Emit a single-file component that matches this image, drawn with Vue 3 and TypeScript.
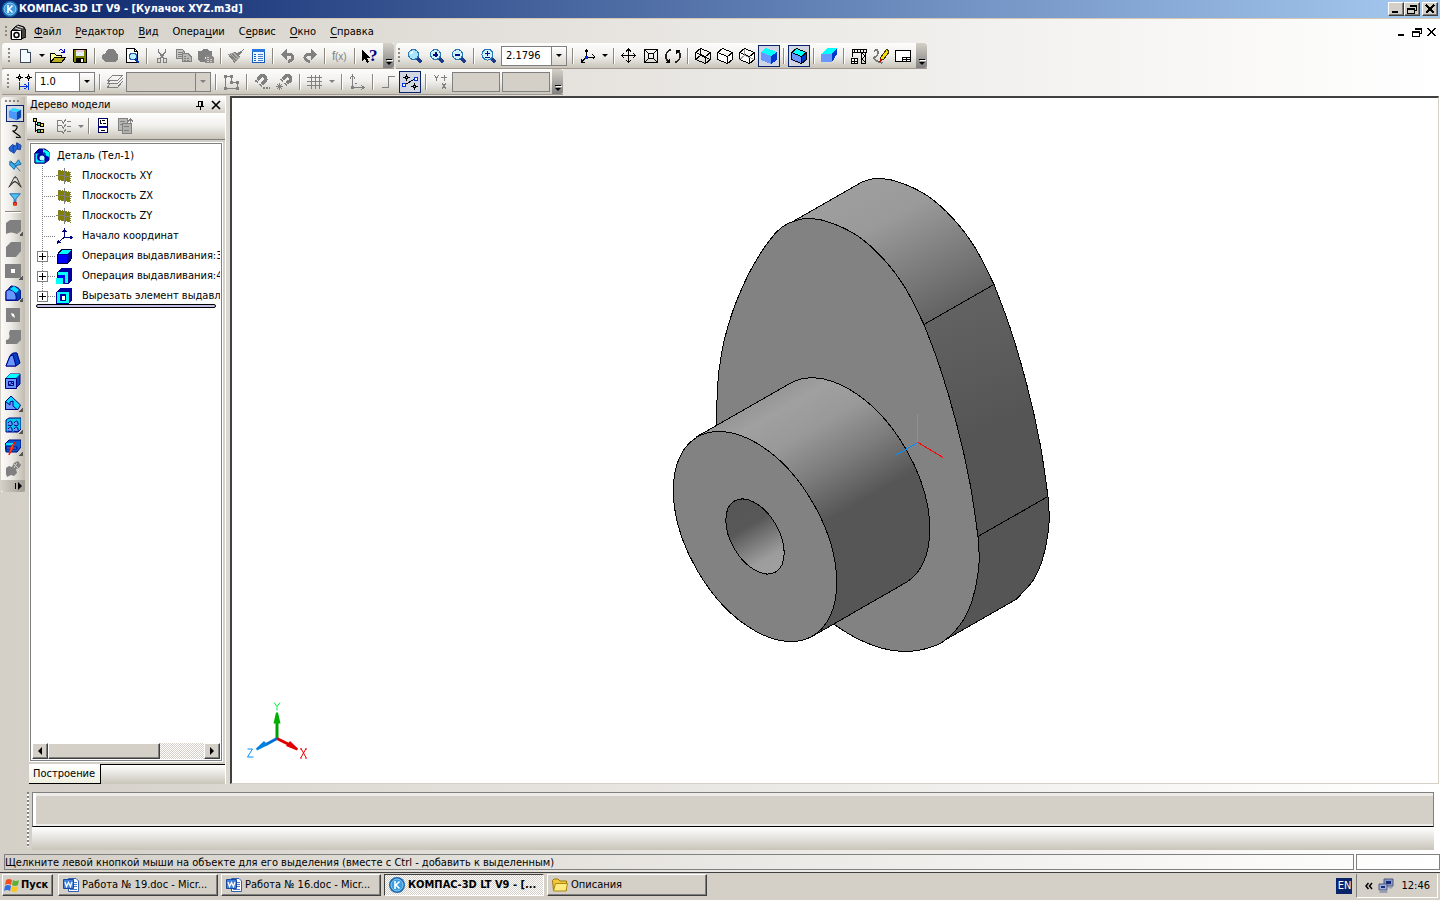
<script setup lang="ts">
import { ref } from 'vue'

type Tool = { kind: 'btn' | 'sep' | 'drop'; icon?: string; label?: string; on?: boolean; off?: boolean }

const b = (icon: string, label: string, extra: Partial<Tool> = {}): Tool => ({ kind: 'btn', icon, label, ...extra })
const sep: Tool = { kind: 'sep' }
const drop: Tool = { kind: 'drop', label: 'Ещё' }
const off = { off: true }
const on = { on: true }

const cubeWire = 'M.5 4.500 5.500 .5 15.500 4.500V11.500L10.500 15.500 .5 11.500ZM.5 4.500 10.500 8.500 15.500 4.500M10.500 8.500V15.500'
const cubeBack = 'M5.500 .5V7.500L.5 11.500M5.500 7.500 15.500 11.500'
const G = '#808080'

const icons: Record<string, string> = {
  blank: '<path d="M3.500 1.500H10.500L13.500 4.500V14.500H3.500Z" fill="#f4fcff" stroke="#404858"/><path d="M10.500 1.500V4.500H13.500" fill="#bfe8f0" stroke="#404858"/>',
  open: '<path d="M.5 14.500V5.500H4.500L6.500 7.500H11.500V9.500" fill="#ffff9c" stroke="#000"/><path d="M.5 14.500 4.500 9.500H15.500L11.500 14.500Z" fill="#b8b020" stroke="#000"/><path d="M8.500 3.500C10 1 12 1 14 4M14.500 1V4.500H11" fill="none" stroke="#0000d0"/>',
  save: '<path d="M1.500 1.500H14.500V14.500H2.500L1.500 13.500Z" fill="#808000" stroke="#000"/><path d="M4 2H12V8H4Z" fill="#e0f0f4"/><path d="M4 2H12V4H4Z" fill="#f4c8d8"/><path d="M4 10H12V15H4Z" fill="#000"/><path d="M9 11H11V14H9Z" fill="#fff"/>',
  print: '<path d="M4 3 6 1H12L14 4 16 7V11L13 14H3L0 11V7L4 5Z" fill="#808080"/>',
  preview: '<path d="M2.500 .5H10.500L13.500 3.500V14.500H2.500Z" fill="#fff" stroke="#000"/><path d="M10.500 .5V3.500H13.500" fill="none" stroke="#000"/><circle cx="9" cy="8.500" r="3.500" fill="#b8ecff" stroke="#2060b0"/><path d="M11 11 15 15" stroke="#0038a8" stroke-width="2.500"/>',
  cut: '<path d="M4.500 1V4L9.500 10M11.500 1V4L6.500 10" stroke="#808080" stroke-width="1.500" fill="none"/><rect x="3.500" y="10.500" width="3" height="4" fill="none" stroke="#808080" stroke-width="1.300"/><rect x="9.500" y="10.500" width="3" height="4" fill="none" stroke="#808080" stroke-width="1.300"/>',
  copy: '<path d="M.5 1.500H6.500L8.500 4V10.500H.5Z" fill="#c8c8c4" stroke="#808080"/><path d="M2 4.500H7M2 6.500H7M2 8.500H6" stroke="#808080"/><path d="M6.500 5.500H12L15.500 9V13.500H6.500Z" fill="#b8b8b4" stroke="#808080"/><path d="M8 8.500H11M8 10.500H14M8 12.500H14" stroke="#808080" stroke-dasharray="2 1"/>',
  paste: '<path d="M0 3H4L5 1H10L11 3H14V9H7V14H2L0 12Z" fill="#808080"/><path d="M8 7H13L16 10V15H7Z" fill="#888"/><path d="M9 9.500H12M9 11.500H14M9 13.500H14" stroke="#d4d0c8" stroke-dasharray="2 1"/>',
  brush: '<path d="M16 1 13 6 10 8 8 6 12 3.500Z" fill="#808080"/><path d="M6 4 12 9 7 15 0 6.500Z" fill="#b4b2ac"/><path d="M6 4 12 9M4 5.500 10 11M2 6 8.500 13M0.500 6.500 7 14.500" stroke="#808080" stroke-width="1.200"/>',
  props: '<rect x="2.500" y="1.500" width="12" height="13" fill="#eef6ff" stroke="#1858b8"/><path d="M2 1H15V4H2Z" fill="#2878e0"/><path d="M4 6.500H6M4 8.500H6M4 10.500H6M4 12.500H6" stroke="#1858b8"/><path d="M8 6.500H13M8 8.500H13M8 10.500H13M8 12.500H13" stroke="#4080d0"/>',
  undo: '<path d="M4 6.500H9Q13 6.500 13 9.500T8 13.500" fill="none" stroke="#808080" stroke-width="3"/><path d="M1 6.500 7 1V12Z" fill="#808080"/>',
  redo: '<path d="M12 6.500H7Q3 6.500 3 9.500T8 13.500" fill="none" stroke="#808080" stroke-width="3"/><path d="M15 6.500 9 1V12Z" fill="#808080"/>',
  fx: '<text x="0" y="12" font-size="12" font-family="Liberation Sans, sans-serif" fill="#808080">f</text><text x="3" y="12" font-size="10" font-family="Liberation Sans, sans-serif" fill="#808080">(x)</text>',
  whats: '<path d="M0 2V13L3 10.500 5 15 7 14 5 10H8Z" fill="#000"/><text x="7" y="13" font-size="17" font-weight="700" font-family="Liberation Serif, serif" fill="#000080">?</text>',
  zoom: '<path d="M10 10 14.500 14.500" stroke="#1c3c8c" stroke-width="3"/><circle cx="6.500" cy="6.500" r="5" fill="#a8e4fc" stroke="#2878b8"/><path d="M4 6Q4 4 6 4" stroke="#fff" fill="none" stroke-width="1.500"/>',
  zoomin: '<path d="M10 10 14.500 14.500" stroke="#1c3c8c" stroke-width="3"/><circle cx="6.500" cy="6.500" r="5" fill="#d0f0fc" stroke="#2878b8"/><path d="M4 6.500H9M6.500 4V9" stroke="#001080" stroke-width="2"/>',
  zoomout: '<path d="M10 10 14.500 14.500" stroke="#1c3c8c" stroke-width="3"/><circle cx="6.500" cy="6.500" r="5" fill="#d0f0fc" stroke="#2878b8"/><path d="M4 6.500H9" stroke="#001080" stroke-width="2"/>',
  zoomscale: '<path d="M10 10 14.500 14.500" stroke="#1c3c8c" stroke-width="3"/><circle cx="6.500" cy="6.500" r="5.500" fill="#d0f0fc" stroke="#2878b8"/><path d="M4 5.500H9M6.500 3V8M4 9.500H9" stroke="#001080" stroke-width="1.500"/>',
  orient: '<path d="M6.500 2V9H15M6 9.500 1.500 14M4.500 4.500 6.500 2 8.500 4.500M12.500 6.500 15 9 12.500 11.500M1.500 10.500V14H5" fill="none" stroke="#000"/><rect x="5" y="8" width="3" height="3" fill="#0020ff"/>',
  pan: '<path d="M7.500 1V15M.5 7.500H15M5 3.500 7.500 1 10 3.500M5 12 7.500 14.500 10 12M3 5 .5 7.500 3 10M12 5 14.500 7.500 12 10" fill="none" stroke="#000"/>',
  fit: '<path d="M1.500 1.500H14.500V14.500H1.500ZM5.500 5.500H10.500V10.500H5.500ZM2 2 5 5M14 2 11 5M2 14 5 11M14 14 11 11" fill="none" stroke="#000"/>',
  rotate: '<path d="M6 1.500Q1 3 1 8T4 13M10 14.500Q15 13 15 8T12 3" fill="none" stroke="#222" stroke-width="1.500"/><path d="M5 10V14.500H0.500Z" fill="#000"/><path d="M11 6V1.500H15.500Z" fill="#000"/>',
  wire: `<path d="${cubeWire}" fill="none" stroke="#000"/><path d="${cubeBack}" fill="none" stroke="#000"/>`,
  hidden: `<path d="${cubeWire}" fill="#fff" stroke="#000"/>`,
  thin: `<path d="${cubeWire}" fill="#fff" stroke="#000"/><path d="${cubeBack}" fill="none" stroke="#999"/>`,
  shade: '<path d="M0 4 5 0 16 4 10 8Z" fill="#00ffff"/><path d="M0 4 10 8V16L0 12Z" fill="#6898ff"/><path d="M10 8 16 4V12L10 16Z" fill="#0038d0"/>',
  shadeedge: '<path d="M0 4 5 0 16 4 10 8Z" fill="#00ffff"/><path d="M0 4 10 8V16L0 12Z" fill="#6898ff"/><path d="M10 8 16 4V12L10 16Z" fill="#0038d0"/>' + `<path d="${cubeWire}" fill="none" stroke="#000"/>`,
  persp: '<path d="M0 6 7 0H16L11 6Z" fill="#00ffff"/><path d="M0 6H11V14H0Z" fill="#6898ff"/><path d="M11 6 16 0V6L11 14Z" fill="#0038d0"/>',
  crane: '<path d="M1.500 5V1.500H15.500V4.500H1.500V9M10.500 5V15.500H14.500V5M10.500 5 14.500 8 10.500 11 14.500 14M3 2V4M6 2V4M9 2V4M12 2V4" fill="none" stroke="#000"/><path d="M0.500 10.500H6.500V15.500H0.500ZM3.500 10.500V15.500M0.500 13H6.500" fill="#fff" stroke="#000"/>',
  sketch: '<path d="M1 3Q5 0 5 4T2 9 4 13 9 14" fill="none" stroke="#777" stroke-width="1.500"/><path d="M7 13 8 9 14 1 16 4 11 11Z" fill="#f0e000" stroke="#403000"/><path d="M7 14V11L10 12Z" fill="#d00000"/>',
  window: '<path d="M0.500 2.500H15.500V13.500H0.500Z" fill="#fff" stroke="#000"/><path d="M7.500 9.500H15.500V13H7.500ZM11.500 9.500V13M7.500 11.500H15.500" fill="none" stroke="#000"/>',
  step: '<path d="M3.500 0V7M0 3.500H7M12.500 0V7M9 3.500H16" stroke="#000"/><path d="M2.500 2.500H4.500V4.500H2.500ZM11.500 2.500H13.500V4.500H11.500Z" fill="#fff" stroke="#000"/><path d="M3.500 8V16M12.500 8V16M4 12.500H12M8.500 10 11.500 12.500 8.500 15" fill="none" stroke="#0030e0"/>',
  layers: '<path d="M0.500 6.500 5.500 1.500H15.500L10.500 6.500ZM2.500 7 0.500 9.500H10.500L15.500 4.500M2.500 10 0.500 13.500H10.500L15.500 7.500" fill="none" stroke="#808080"/>',
  param: '<path d="M2.500 2.500H8.500V8.500H14.500V14.500H2.500Z" fill="none" stroke="#808080"/><path d="M1 1H4V4H1ZM7 1H10V4H7ZM7 7H10V10H7ZM13 7H16V10H13ZM13 13H16V16H13ZM1 13H4V16H1Z" fill="#808080"/>',
  magnet: '<path d="M2 8 6 3Q9 0 11 3T10 8L6 12" fill="none" stroke="#808080" stroke-width="3.500"/><path d="M2 5 5 8M6 9 9 12" stroke="#eee"/><path d="M9 14H11M12 14H14M15 14H16" stroke="#808080" stroke-width="2"/>',
  snap: '<path d="M5 7 9 3Q11 0 14 3T12 8L9 11" fill="none" stroke="#808080" stroke-width="3.500"/><path d="M5 4 8 7M9 8 12 11" stroke="#eee"/><path d="M3.500 9V16M0 12.500H7M1 10 6 15M6 10 1 15" stroke="#808080"/>',
  grid: '<path d="M4.500 1V15M8.500 1V15M12.500 1V15M0 3.500H15M0 7.500H15M0 11.500H15" stroke="#808080"/>',
  lcs: '<path d="M3.500 1V13.500H15M1 4.500 3.500 1 6 4.500M12 11 15 13.500 12 16" fill="none" stroke="#808080"/><path d="M2 12H5V15H2Z" fill="#808080"/><path d="M6 9.500H8" stroke="#808080"/>',
  ortho: '<path d="M2 13.500H8.500V2.500H15" fill="none" stroke="#808080"/>',
  round: '<path d="M4.500 0V7M1 3.500H8M12.500 9V16M9 12.500H16" stroke="#000"/><path d="M3.500 2.500H5.500V4.500H3.500ZM11.500 11.500H13.500V13.500H11.500Z" fill="#d2d6e2" stroke="#000"/><path d="M3 10.500 13 5" stroke="#000"/><rect x="0.500" y="9.500" width="3" height="3" fill="#fff" stroke="#0030e0"/><rect x="12.500" y="3.500" width="3" height="3" fill="#fff" stroke="#0030e0"/>',
  xy: '<path d="M1 1 3.500 4 6 1M3.500 4V7M8 3.500H14M11 1V6.500M9 9 13 15M13 9 9 15" fill="none" stroke="#808080"/>',
  // model tree panel
  treeview: '<path d="M3.500 2V14M3 6.500H8M3 12.500H8" fill="none" stroke="#000"/><path d="M1.500 0.500H4.500V3.500H1.500ZM8.500 5H11.500V8H8.500ZM8.500 11H11.500V14H8.500Z" fill="#f0e040" stroke="#000"/><path d="M5.500 4.500H8V7H5.500ZM5.500 11.500H8V14H5.500Z" fill="#30c080" stroke="#000"/>',
  checks: '<path d="M1.500 2V14M1 2.500H6M1 7.500H6M1 13.500H6M6 3 7.500 5 10 1M6 8 7.500 10 10 6M6 13 7.500 15 10 11M11 3.500H15M11 8.500H15M11 13.500H15" fill="none" stroke="#808080"/>',
  doc: '<path d="M3.500 .5H12.500V14.500H3.500Z" fill="#fff" stroke="#000060"/><path d="M3 8H13V10H3Z" fill="#000080"/><path d="M5.500 2V5.500H7M7 2.500H10M8 5.500H11" fill="none" stroke="#000"/><path d="M6 12.500H10" stroke="#000"/>',
  docs: '<path d="M1.500 .5H10.500V12.500H1.500Z" fill="#b8b8b4" stroke="#808080"/><path d="M5.500 5.500H14.500V15.500H5.500Z" fill="#b0b0ac" stroke="#808080"/><path d="M3 3.500H8M3 6.500H5M7 8.500H12M7 12.500H12M11 3 13.500 1 16 3M13.500 1V5" fill="none" stroke="#808080" stroke-width="1.500"/>',
  part: '<path d="M1 5 5 1H11L15 4V12L11 15H1Z" fill="#0000c0" stroke="#000060"/><path d="M9 1 15 4V9L9 6Z" fill="#00ffff"/><path d="M1 5H11V15H1Z" fill="#00e8ff" stroke="#000080"/><circle cx="7" cy="9" r="4" fill="#0000a0"/><circle cx="8" cy="10" r="2.500" fill="#c0ffff"/>',
  plane: '<path d="M2 2 14 4V14L2 12Z" fill="#808000"/><path d="M8 0V16M0 7 16 9" stroke="#808080"/><path d="M2 2 14 4V14L2 12Z" fill="none" stroke="#808040" stroke-dasharray="1 1"/>',
  origin: '<path d="M8.500 9V2M8 9.500H15M8 9.500 2 14.500" stroke="#000080" fill="none"/><path d="M8.500 0 11 4H6ZM17.500 9.500 13.500 7V12ZM0.500 16 2 11.500 5 14.500Z" fill="#000080"/>',
  extrude: '<path d="M1.500 6.500 5.500 1.500H15.500V10.500L11.500 15.500H1.500Z" fill="#0000a0" stroke="#000040"/><path d="M2 6 6 2H15L11 6Z" fill="#00ffff"/><path d="M2 7H11V15H2Z" fill="#0000ff"/>',
  extrude2: '<path d="M1 4 5 0H16V12L12 16H1Z" fill="#0000a0"/><path d="M2 4H12V15H9V7H2Z" fill="#00ffff"/><path d="M0 10H7V16H0Z" fill="#00ffff"/><path d="M0 10 3 7H9V13L7 15V10Z" fill="#0000ff"/>',
  cutout: '<path d="M0 4 4 0H16V12L12 16H0Z" fill="#0000a0"/><path d="M1 4H13V15H1Z" fill="#00ffff"/><path d="M4 6H10V13H4Z" fill="#0000a0"/><path d="M6 8H9V12H6Z" fill="#fff"/>',
  // compact panel
  cube: '<path d="M1 4 6 1 15 3 11 6Z" fill="#28d8ff"/><path d="M1 4 10 6V15L1 12Z" fill="#4898ff"/><path d="M10 6 15 3V12L10 15Z" fill="#0848b0"/>',
  curve: '<path d="M5 2Q12 1 10 5T6 8 11 12 9 15" fill="none" stroke="#000" stroke-width="1.300"/>',
  surf: '<path d="M1 8 5 4 9 6 10 2 15 5 14 10 10 9 7 14 2 11Z" fill="#2868d8" stroke="#103888"/><path d="M6 5V12M11 4V9" stroke="#103888"/>',
  surf2: '<path d="M2 4 8 7 12 2 15 7 9 9 7 13 2 8Z" fill="#38b0e8" stroke="#1860a0"/><path d="M3 3 14 15" stroke="#1860a0"/>',
  measure: '<path d="M1 14 7 3H10L15 14M3 10Q8 5 13 11M7 3 9 1M1 14 8 7 15 14" fill="none" stroke="#222"/>',
  filter: '<path d="M2 2H14L9 8V11H7V8Z" fill="#50c0f0" stroke="#1860b0"/><rect x="6.500" y="12" width="3" height="3" fill="#ff6000" stroke="#c00000"/>',
  g1: `<path d="M1 4 5 1H16V12L12 15Q6 12 1 15Z" fill="${G}"/>`,
  g2: `<path d="M1 6 6 1H16V10L11 16H1Z" fill="${G}"/>`,
  g3: `<path d="M0 1H16V15H0Z" fill="${G}"/><path d="M6 6H10V10H6Z" fill="#fff"/>`,
  g4: `<path d="M1 1H15V15H1Z" fill="${G}"/><path d="M6 6 9 7 10 11 7 9Z" fill="#fff"/>`,
  g5: `<path d="M5 1H16V11L12 15H1V11Q6 11 4 4Z" fill="${G}"/>`,
  g6: `<path d="M1 7 4 5 7 6 9 2 13 0 16 4 14 7 11 8 12 12 9 15 6 14 2 16 1 13Z" fill="${G}"/><path d="M9 3 13 7M12 2 9 7" stroke="#d4d0c8"/>`,
  fillet: '<path d="M1 7 6 1Q14 1 16 7V13L12 16H1Z" fill="#0040b0" stroke="#000080"/><path d="M1 15V6Q4 3 8 6T11 15Z" fill="#6898ff" stroke="#000080"/><path d="M5 4 9 1 14 5 11 8Z" fill="#00e0ff"/>',
  draft: '<path d="M1 15 5 5Q7 1 12 2L15 12 11 15Z" fill="#0040c0" stroke="#000080"/><path d="M1 15 5 5 8 4 11 15Z" fill="#6898ff" stroke="#000080"/>',
  shell: '<path d="M1 5 5 1H15V11L11 15H1Z" fill="#0040c0" stroke="#000080"/><path d="M1 5 5 1H15L11 5Z" fill="#00ffff"/><path d="M.5 5.500H11.500V15.500H.5Z" fill="#6898ff" stroke="#000080"/><path d="M3.500 8.500H8.500V12.500H3.500ZM4 12 6.500 10.500V8M7 10.500H9" fill="none" stroke="#000080"/>',
  section: '<path d="M.5 6.500 6 1 15.500 10 13 14.500H.5Z" fill="#00d8ff" stroke="#000080"/><path d="M.5 6.500 5 10V7L8 6V11L12 14.500H.5Z" fill="#6898ff" stroke="#000080"/>',
  array: '<path d="M1 3 4 1H16V12L13 15H1Z" fill="#00c8e8" stroke="#000080"/><path d="M3 6Q6 2 7 6T3 8M9 6Q12 2 13 6T9 8M3 12Q6 8 7 12T3 14M9 12Q12 8 13 12T9 14" fill="#6898ff" stroke="#000080"/>',
  simplify: '<path d="M0 5 4 1H16V8L12 13H1Z" fill="#0060d0" stroke="#000080"/><path d="M1 4H10L8 6H1Z" fill="#00e0ff"/><path d="M1 8H12V10H1Z" fill="#6898ff" stroke="#000080"/><path d="M4 16Q5 7 10 3L7 11Z" fill="#ff7000" stroke="#ff1000"/>',
  // shell
  kompas: '<circle cx="8" cy="8" r="8" fill="#1868b0"/><circle cx="8" cy="8" r="6" fill="#3c9ce0" stroke="#90ccf4"/><path d="M6 4V12M10.500 4.500 7 8 10.500 11.500" stroke="#fff" fill="none" stroke-width="1.600"/>',
  docpart: '<path d="M1 7 5 3 8 1 14 3 16 7V13L11 15H1Z" fill="#444" stroke="#000"/><path d="M1.500 6.500H11.500V15.500H1.500Z" fill="#fff" stroke="#000"/><circle cx="6.500" cy="11" r="2.500" fill="#fff" stroke="#000" stroke-width="1.500"/><path d="M7 2 13 4M5 4 11 6" stroke="#ddd"/>',
  flag: '<path d="M2 3Q5 1 8 3L7 8Q4 6 1 8Z" fill="#f05020"/><path d="M9 3Q12 5 15 3L14 8Q11 10 8 8Z" fill="#60b030"/><path d="M1 9Q4 7 7 9L6 14Q3 12 0 14Z" fill="#3070e0"/><path d="M8 9Q11 11 14 9L13 14Q10 16 7 14Z" fill="#f8c820"/>',
  word: '<path d="M5.500 1.500H13L15.500 4V14.500H5.500Z" fill="#fff" stroke="#3060b0"/><path d="M11 5.500H14M11 7.500H14M11 9.500H14M7 12.500H14" stroke="#4878c8"/><path d="M0.500 2.500H10.500V11.500H0.500Z" fill="#4080d8" stroke="#1848a0"/><path d="M2 5 3.500 9.500 5.500 5.500 7.500 9.500 9 5" fill="none" stroke="#fff" stroke-width="1.300"/>',
  folder: '<path d="M0.500 3.500 2 2H6L8 4H14.500V13.500H1.500Z" fill="#f0c83c" stroke="#a07808"/><path d="M1.500 14 3.500 6.500H15.500L14 14Z" fill="#ffec80" stroke="#b08810"/>',
  net: '<path d="M6 1H15V8H6Z" fill="#8898d0" stroke="#505878"/><path d="M8 3H13V6H8Z" fill="#182878"/><path d="M1 6H9V12H1Z" fill="#a0b0e0" stroke="#505878"/><path d="M3 8H7V10H3Z" fill="#182878"/><path d="M2 13H10L9 15H1ZM9 9H15L13 11Z" fill="#98a0b8"/>',
}

const standard: Tool[] = [
  b('blank', 'Создать'), drop, b('open', 'Открыть'), b('save', 'Сохранить'), sep,
  b('print', 'Печать', off), b('preview', 'Просмотр'), sep,
  b('cut', 'Вырезать', off), b('copy', 'Копировать', off), b('paste', 'Вставить', off), sep,
  b('brush', 'Копировать свойства', off), b('props', 'Свойства'), sep,
  b('undo', 'Отменить', off), b('redo', 'Повторить', off), sep,
  b('fx', 'Переменные', off), sep, b('whats', 'Что это такое?'),
]
const zoomTools: Tool[] = [b('zoom', 'Увеличить рамкой'), b('zoomin', 'Увеличить'), b('zoomout', 'Уменьшить'), sep, b('zoomscale', 'Масштаб')]
const viewTools: Tool[] = [
  sep, b('orient', 'Ориентация'), drop, sep,
  b('pan', 'Сдвинуть'), b('fit', 'Показать всё'), b('rotate', 'Повернуть'), sep,
  b('wire', 'Каркас'), b('hidden', 'Без невидимых линий'), b('thin', 'Невидимые линии тонкие'), b('shade', 'Полутоновое', on), sep,
  b('shadeedge', 'Полутоновое с каркасом', on), sep, b('persp', 'Перспектива'), sep,
  b('crane', 'Перестроить'), b('sketch', 'Эскиз'), b('window', 'Окно'),
]
const stateTools: Tool[] = [
  sep, b('param', 'Параметрический режим', off), sep,
  b('magnet', 'Настройка привязок', off), b('snap', 'Запретить привязки', off), sep,
  b('grid', 'Сетка', off), drop, sep, b('lcs', 'Локальная СК', off), sep,
  b('ortho', 'Ортогональное черчение', off), b('round', 'Округление', on), sep, b('xy', 'Координаты', off),
]

const modes = [
  ['cube', 'Редактирование детали'], ['curve', 'Пространственные кривые'], ['surf', 'Поверхности'],
  ['surf2', 'Вспомогательная геометрия'], ['measure', 'Измерения'], ['filter', 'Фильтры'],
]
const operations: [string, string, boolean][] = [
  ['g1', 'Выдавливание', true], ['g2', 'Приклеить', false], ['g3', 'Вырезать', true], ['fillet', 'Скругление', true],
  ['g4', 'Отверстие', false], ['g5', 'Ребро', false], ['draft', 'Уклон', false], ['shell', 'Оболочка', false],
  ['section', 'Сечение', true], ['array', 'Массив', true], ['simplify', 'Отсечение', true], ['g6', 'Булева операция', false],
]

const menu = [
  ['', 'Ф', 'айл'], ['', 'Р', 'едактор'], ['', 'В', 'ид'], ['Опера', 'ц', 'ии'],
  ['С', 'е', 'рвис'], ['', 'О', 'кно'], ['', 'С', 'правка'],
]

const tree = [
  { icon: 'plane', text: 'Плоскость XY', more: false },
  { icon: 'plane', text: 'Плоскость ZX', more: false },
  { icon: 'plane', text: 'Плоскость ZY', more: false },
  { icon: 'origin', text: 'Начало координат', more: false },
  { icon: 'extrude', text: 'Операция выдавливания:3', more: true },
  { icon: 'extrude2', text: 'Операция выдавливания:4', more: true },
  { icon: 'cutout', text: 'Вырезать элемент выдавливания', more: true },
]

const tasks = [
  { icon: 'word', text: 'Работа № 19.doc - Micr...', active: false },
  { icon: 'word', text: 'Работа № 16.doc - Micr...', active: false },
  { icon: 'kompas', text: 'КОМПАС-3D LT V9 - [...', active: true },
  { icon: 'folder', text: 'Описания', active: false },
]

const step = ref('1.0')
const scale = ref('2.1796')

type P = [number, number]

// Catmull-Rom curve through the points, written as cubic segments
function spline(pts: P[], lead = 'M'): string {
  let d = `${lead}${pts[0][0]} ${pts[0][1]}`
  for (let i = 0; i < pts.length - 1; i++) {
    const a = pts[Math.max(i - 1, 0)]
    const p = pts[i]
    const q = pts[i + 1]
    const z = pts[Math.min(i + 2, pts.length - 1)]
    const c = [p[0] + (q[0] - a[0]) / 6, p[1] + (q[1] - a[1]) / 6, q[0] - (z[0] - p[0]) / 6, q[1] - (z[1] - p[1]) / 6]
    d += `C${c.map((n) => n.toFixed(1)).join(' ')} ${q[0]} ${q[1]}`
  }
  return d
}

const left: P[] = [[717, 430], [717, 400], [719, 370], [724, 341], [732, 313], [741, 290], [751, 269], [763, 249], [775, 233]]
const crown: P[] = [[775, 233], [783, 226], [793, 221], [807, 218], [827, 221], [857, 235], [883, 258], [905, 287], [924, 324]]
const flank: P[] = [[924, 324], [940, 367], [957, 425], [970, 483], [978, 536]]
const heel: P[] = [[978, 536], [979, 563], [973, 597], [963, 620], [946, 639], [930, 647], [907, 651], [883, 648], [857, 638], [834, 624]]
const shift = (pts: P[]): P[] => pts.map(([x, y]) => [x + 70, y - 40])

const face = spline(left) + spline(crown, 'L') + spline(flank, 'L') + spline(heel, 'L') + 'L800 560Z'
const crownSide = spline(crown.slice(2)) + spline(shift(crown.slice(2)).reverse(), 'L') + 'Z'
const flankSide = spline(flank) + spline(shift(flank).reverse(), 'L') + 'Z'
const heelEdge = heel.slice(0, 5)
const heelSide = spline(heelEdge) + spline(shift(heelEdge).reverse(), 'L') + 'Z'
</script>

<template>
  <div class="desktop">
    <header class="title">
      <svg class="ico" viewBox="0 0 16 16" v-html="icons.kompas" />
      <h1>КОМПАС-3D LT V9 - [Кулачок XYZ.m3d]</h1>
      <button class="cap" aria-label="Свернуть"><svg viewBox="0 0 12 10"><path d="M2 8H8" stroke="#000" stroke-width="2" /></svg></button>
      <button class="cap" aria-label="Восстановить"><svg viewBox="0 0 12 10"><path d="M4.500 3V1.500H10.500V6.500H8.500M4 2H11M1.500 4.500H8.500V9.500H1.500ZM1 5H9" fill="none" stroke="#000" /></svg></button>
      <button class="cap last" aria-label="Закрыть"><svg viewBox="0 0 12 10"><path d="M2 1 10 9M10 1 2 9" stroke="#000" stroke-width="1.500" /></svg></button>
    </header>

    <div class="client">
      <nav class="menubar">
        <i class="grip" />
        <svg class="ico" viewBox="0 0 16 16" v-html="icons.docpart" />
        <button v-for="m in menu" :key="m.join('')" class="menu">{{ m[0] }}<u>{{ m[1] }}</u>{{ m[2] }}</button>
        <span class="fill" />
        <button class="mdi" aria-label="Свернуть документ"><svg viewBox="0 0 12 10"><path d="M2 8H8" stroke="#000" stroke-width="2" /></svg></button>
        <button class="mdi" aria-label="Восстановить документ"><svg viewBox="0 0 12 10"><path d="M4.500 3V1.500H10.500V6.500H8.500M4 2H11M1.500 4.500H8.500V9.500H1.500ZM1 5H9" fill="none" stroke="#000" /></svg></button>
        <button class="mdi" aria-label="Закрыть документ"><svg viewBox="0 0 12 10"><path d="M2 1 9 9M9 1 2 9" stroke="#000" stroke-width="1.500" /></svg></button>
      </nav>

      <div class="bars">
        <div class="bar standard">
          <i class="grip" />
          <template v-for="(t, i) in standard" :key="i">
            <i v-if="t.kind === 'sep'" class="sep" />
            <button v-else-if="t.kind === 'drop'" class="drop" :aria-label="t.label"><i class="tri" /></button>
            <button v-else class="tool" :disabled="t.off" :aria-label="t.label"><svg viewBox="0 0 16 16" v-html="icons[t.icon!]" /></button>
          </template>
          <button class="more" aria-label="Параметры панели"><i class="dash" /><i class="tri" /></button>
        </div>
        <div class="bar viewbar">
          <i class="grip" />
          <template v-for="(t, i) in zoomTools" :key="i">
            <i v-if="t.kind === 'sep'" class="sep" />
            <button v-else class="tool" :aria-label="t.label"><svg viewBox="0 0 16 16" v-html="icons[t.icon!]" /></button>
          </template>
          <div class="combo zoomfield">
            <input v-model="scale" aria-label="Текущий масштаб" /><button aria-label="Список масштабов"><i class="tri" /></button>
          </div>
          <template v-for="(t, i) in viewTools" :key="'v' + i">
            <i v-if="t.kind === 'sep'" class="sep" />
            <button v-else-if="t.kind === 'drop'" class="drop" :aria-label="t.label"><i class="tri" /></button>
            <button v-else class="tool" :class="{ on: t.on }" :aria-label="t.label"><svg viewBox="0 0 16 16" v-html="icons[t.icon!]" /></button>
          </template>
          <button class="more" aria-label="Параметры панели"><i class="dash" /><i class="tri" /></button>
        </div>
      </div>

      <div class="bars">
        <div class="bar state">
          <i class="grip" />
          <button class="tool" aria-label="Шаг курсора"><svg viewBox="0 0 16 16" v-html="icons.step" /></button>
          <div class="combo stepfield">
            <input v-model="step" aria-label="Текущий шаг курсора" /><button aria-label="Список шагов"><i class="tri" /></button>
          </div>
          <i class="sep" />
          <button class="tool" disabled aria-label="Слои"><svg viewBox="0 0 16 16" v-html="icons.layers" /></button>
          <div class="combo layer off">
            <select disabled aria-label="Текущий слой"><option></option></select><span class="arrow"><i class="tri" /></span>
          </div>
          <template v-for="(t, i) in stateTools" :key="i">
            <i v-if="t.kind === 'sep'" class="sep" />
            <button v-else-if="t.kind === 'drop'" class="drop dim" :aria-label="t.label"><i class="tri" /></button>
            <button v-else class="tool" :class="{ on: t.on }" :disabled="t.off" :aria-label="t.label"><svg viewBox="0 0 16 16" v-html="icons[t.icon!]" /></button>
          </template>
          <div class="coords">
            <input class="coord" disabled aria-label="Координата X" />
            <input class="coord" disabled aria-label="Координата Y" />
          </div>
          <button class="more" aria-label="Параметры панели"><i class="dash" /><i class="tri" /></button>
        </div>
      </div>

      <main class="work">
        <aside class="compact">
          <i class="hgrip" />
          <button v-for="(m, i) in modes" :key="m[0]" class="mode" :class="{ on: i === 0 }" :aria-label="m[1]"><svg viewBox="0 0 16 16" v-html="icons[m[0]]" /></button>
          <i class="rule" />
          <button v-for="o in operations" :key="o[0]" class="op" :class="{ sub: o[2] }" :aria-label="o[1]"><svg viewBox="0 0 16 16" v-html="icons[o[0]]" /></button>
          <button class="end" aria-label="Параметры панели"><svg viewBox="0 0 8 8"><path d="M1.500 1V7" stroke="#000" /><path d="M4 0 8 4 4 8Z" /></svg></button>
        </aside>

        <section class="panel">
          <div class="phead">
            <h2>Дерево модели</h2>
            <button aria-label="Закрепить"><svg viewBox="0 0 10 10"><path d="M3.500 1V6M6.500 1V6M7.500 1V6M3 1.500H8M1 6.500H9M5.500 7V10" stroke="#000" fill="none" /></svg></button>
            <button aria-label="Закрыть панель"><svg viewBox="0 0 10 10"><path d="M1 1 9 9M9 1 1 9" stroke="#000" stroke-width="1.600" /></svg></button>
          </div>
          <div class="ptools">
            <button class="tool" aria-label="Структура модели"><svg viewBox="0 0 16 16" v-html="icons.treeview" /></button>
            <button class="tool" disabled aria-label="Состав дерева"><svg viewBox="0 0 16 16" v-html="icons.checks" /></button>
            <button class="drop dim" aria-label="Ещё"><i class="tri" /></button>
            <i class="sep" />
            <button class="tool" aria-label="Отношения"><svg viewBox="0 0 16 16" v-html="icons.doc" /></button>
            <button class="tool" disabled aria-label="Дополнительное окно"><svg viewBox="0 0 16 16" v-html="icons.docs" /></button>
          </div>
          <div class="treebox">
            <div class="root"><svg class="ico" viewBox="0 0 16 16" v-html="icons.part" /><span>Деталь (Тел-1)</span></div>
            <ul>
              <li v-for="(n, i) in tree" :key="n.text">
                <svg class="stem" viewBox="0 0 24 20">
                  <path :d="i === tree.length - 1 ? 'M10.500 0V10' : 'M10.500 0V20'" stroke="#808080" stroke-dasharray="1 1" />
                  <path d="M12 10.500H24" stroke="#808080" stroke-dasharray="1 1" />
                  <g v-if="n.more">
                    <rect x="5.500" y="5.500" width="10" height="10" fill="#fff" stroke="#808080" />
                    <path d="M7 10.500H14M10.500 7V14" stroke="#000" />
                  </g>
                </svg>
                <svg class="node" viewBox="0 0 17 16" v-html="icons[n.icon]" />
                <span>{{ n.text }}</span>
              </li>
            </ul>
            <i class="mark" />
            <span class="fill" />
            <div class="scroll">
              <button aria-label="Влево"><svg viewBox="0 0 6 8"><path d="M5 0V8L1 4Z" /></svg></button>
              <i class="thumb" />
              <span class="fill" />
              <button aria-label="Вправо"><svg viewBox="0 0 6 8"><path d="M1 0V8L5 4Z" /></svg></button>
            </div>
          </div>
          <div class="tabs"><button class="tab">Построение</button><span class="rest" /></div>
        </section>

        <section class="view">
          <svg viewBox="232 98 1206 684" role="img" aria-label="Кулачок">
            <defs>
              <linearGradient id="boss" gradientUnits="userSpaceOnUse" x1="697" y1="436" x2="812" y2="636">
                <stop offset="0" stop-color="#969696" /><stop offset=".08" stop-color="#a0a0a0" /><stop offset=".22" stop-color="#999" />
                <stop offset=".4" stop-color="#7c7c7c" /><stop offset=".6" stop-color="#565656" /><stop offset="1" stop-color="#565656" />
              </linearGradient>
              <linearGradient id="bore">
                <stop offset="0" stop-color="#565656" /><stop offset=".35" stop-color="#585858" /><stop offset=".8" stop-color="#9c9c9c" /><stop offset="1" stop-color="#a0a0a0" />
              </linearGradient>
              <linearGradient id="crown" gradientUnits="userSpaceOnUse" x1="825" y1="200" x2="895" y2="335">
                <stop offset="0" stop-color="#9e9e9e" /><stop offset=".3" stop-color="#9a9a9a" /><stop offset=".65" stop-color="#7f7f7f" /><stop offset="1" stop-color="#646464" />
              </linearGradient>
              <linearGradient id="flank" gradientUnits="userSpaceOnUse" x1="940" y1="310" x2="985" y2="430">
                <stop offset="0" stop-color="#626262" /><stop offset="1" stop-color="#555" />
              </linearGradient>
            </defs>
            <g stroke="#000" shape-rendering="crispEdges">
              <path :d="crownSide" fill="url(#crown)" />
              <path :d="flankSide" fill="url(#flank)" />
              <path :d="heelSide" fill="#555" />
              <path :d="face" fill="#828282" />
              <path d="M697 436 790 383A115 67 60 0 1 906 582L812 636Z" fill="url(#boss)" />
              <ellipse cx="755" cy="536" rx="115" ry="67" transform="rotate(60 755 536)" fill="#828282" />
              <ellipse cx="755" cy="536" rx="41" ry="24" transform="rotate(60 755 536)" fill="url(#bore)" />
            </g>
            <g fill="none" shape-rendering="crispEdges">
              <path d="M917.500 413V442" stroke="#909090" /><path d="M918 442 895 455" stroke="#0090ff" /><path d="M918 442 943 457" stroke="#f00" />
            </g>
            <path d="M277 738V720" stroke="#00a000" stroke-width="3" /><path d="M276 712H278L280.500 723H273.500Z" fill="#00b000" />
            <path d="M277 738 266 744" stroke="#0070d8" stroke-width="3" /><path d="M256 748 264 740.500 268 744.500 257 750Z" fill="#0080e0" />
            <path d="M277 738 289 744" stroke="#e00000" stroke-width="3" /><path d="M298 748 290 740.500 286 745.500 297 750Z" fill="#e00000" />
            <path d="M274 702 277 706 280 702M277 706V710" fill="none" stroke="#00f040" />
            <path d="M247.500 748.500H252.500L247.500 756.500H253.500" fill="none" stroke="#0090ff" />
            <path d="M301 748 306 757M306 748 301 757M300 748.500H302M305 748.500H307M300 757.500H302M305 757.500H307" stroke="#f00000" />
          </svg>
        </section>
      </main>

      <section class="props">
        <i class="vgrip" />
        <div class="pbody"><div class="pframe" /><div class="pfoot" /></div>
      </section>

      <footer class="status">
        <p>Щелкните левой кнопкой мыши на объекте для его выделения (вместе с Ctrl - добавить к выделенным)</p>
        <p class="cell" />
      </footer>
    </div>

    <nav class="taskbar">
      <button class="task start"><svg class="ico" viewBox="0 0 16 16" v-html="icons.flag" />Пуск</button>
      <button v-for="t in tasks" :key="t.text" class="task" :class="{ active: t.active }">
        <svg class="ico" viewBox="0 0 16 16" v-html="icons[t.icon]" /><span>{{ t.text }}</span>
      </button>
      <span class="fill" />
      <button class="lang">EN</button>
      <div class="tray">
        <button class="less" aria-label="Показать значки"><svg viewBox="0 0 8 8"><path d="M3.500 1 1 4 3.500 7M7 1 4.500 4 7 7" fill="none" stroke="#000" stroke-width="1.500" /></svg></button>
        <svg class="ico" viewBox="0 0 16 16" v-html="icons.net" />
        <time>12:46</time>
      </div>
    </nav>
  </div>
</template>

<style>
body {
  margin: 0;
}
</style>

<style scoped>
* {
  box-sizing: border-box;
}
.desktop {
  display: flex;
  flex-direction: column;
  height: 100vh;
  overflow: hidden;
  background: #d4d0c8;
  color: #000;
  font: 11px/14px 'DejaVu Sans Condensed', 'DejaVu Sans', sans-serif;
}
button,
input,
select {
  margin: 0;
  padding: 0;
  border: 0;
  border-radius: 0;
  background: none;
  color: #000;
  font: inherit;
}
button {
  display: flex;
  flex: none;
  align-items: center;
  justify-content: center;
}
i {
  display: block;
  flex: none;
}
svg {
  display: block;
  flex: none;
}
.ico {
  width: 16px;
  height: 16px;
}
.fill {
  flex: 1;
}

/* title bar */
.title {
  display: flex;
  align-items: center;
  flex: none;
  height: 18px;
  padding: 0 2px;
  background: linear-gradient(90deg, #0a246a, #a6caf0);
}
.title h1 {
  flex: 1;
  margin: 0;
  padding-left: 1px;
  color: #fff;
  font-size: 11px;
  font-weight: 700;
}
.cap {
  width: 16px;
  height: 14px;
  border: 1px solid;
  border-color: #fff #404040 #404040 #fff;
  background: #d4d0c8;
  box-shadow: inset -1px -1px #808080;
}
.cap svg,
.mdi svg {
  width: 12px;
  height: 10px;
  shape-rendering: crispEdges;
}
.cap.last {
  margin-left: 2px;
}

/* client area */
.client {
  display: flex;
  flex: 1;
  flex-direction: column;
  min-height: 0;
  border-top: 1px solid #d4c8b4;
  background: linear-gradient(90deg, #d4d0c8, #fff);
}
.menubar {
  display: flex;
  align-items: center;
  height: 24px;
  padding: 2px 1px 0 5px;
}
.menubar .grip {
  height: 12px;
  margin-right: 2px;
}
.menu {
  height: 20px;
  padding: 0 7px;
}
.menu u {
  text-underline-offset: 2px;
}
.menubar > .ico {
  margin-right: 1px;
}
.mdi {
  width: 15px;
  height: 14px;
}
.grip {
  width: 3px;
  height: 16px;
  background: repeating-linear-gradient(#8c8880 0 2px, transparent 2px 4px);
  border-right: 1px solid transparent;
  background-clip: padding-box;
}
.bars {
  display: flex;
  gap: 2px;
  height: 26px;
  padding-left: 2px;
}
.bar {
  display: flex;
  align-items: center;
  height: 26px;
  padding-left: 5px;
  border-bottom: 1px solid #a09890;
  border-radius: 3px 0 0 0;
  background: linear-gradient(#fdfdfc, #f0efec 50%, #c9c5ba);
}
.bar .grip {
  margin-right: 3px;
}
.standard {
  padding-left: 6px;
}
.viewbar {
  padding-left: 2px;
}
.tool {
  width: 22px;
  height: 22px;
}
.tool svg {
  width: 16px;
  height: 16px;
  shape-rendering: crispEdges;
}
.on {
  border: 1px solid #0a246a;
  background: #d2d6e2;
}
.drop {
  width: 11px;
  height: 22px;
}
.tri {
  width: 0;
  height: 0;
  border: 3px solid transparent;
  border-top-color: #000;
  border-bottom: 0;
}
.dim .tri,
.off .tri {
  border-top-color: #808080;
}
.sep {
  width: 2px;
  height: 16px;
  margin: 0 3px;
  border-left: 1px solid #8c8880;
  border-right: 1px solid #fff;
}
.state .sep {
  margin-left: 4px;
}
.more {
  flex-direction: column;
  justify-content: flex-end;
  gap: 2px;
  width: 11px;
  height: 25px;
  margin-left: 2px;
  padding-bottom: 3px;
  border-radius: 0 3px 3px 0;
  background: linear-gradient(#d4d0c8, #808080);
}
.dash {
  width: 6px;
  height: 1px;
  background: #000;
  box-shadow: 1px 1px #fff;
}
.combo {
  display: flex;
  height: 20px;
  border: 1px solid #808080;
  background: #fff;
}
.combo input,
.combo select {
  flex: 1;
  min-width: 0;
  padding-left: 4px;
  appearance: none;
}
.combo button,
.combo .arrow {
  display: flex;
  align-items: center;
  justify-content: center;
  width: 15px;
  border-left: 1px solid #808080;
  background: linear-gradient(#fff, #d8d5cc);
}
.combo.off,
.combo.off .arrow,
.coord {
  background: #d4d0c8;
}
.zoomfield {
  width: 66px;
  margin: 0 2px 0 1px;
}
.stepfield {
  width: 60px;
}
.layer {
  width: 85px;
}
.coords {
  display: flex;
  gap: 2px;
}
.coord {
  width: 48px;
  height: 20px;
  border: 1px solid #808080;
}

/* work area */
.work {
  display: flex;
  flex: 1;
  min-height: 0;
  margin-top: 1px;
}
.compact {
  display: flex;
  flex-direction: column;
  align-items: center;
  align-self: flex-start;
  width: 24px;
  margin: 1px 2px 0 1px;
  padding-top: 3px;
  border-radius: 4px 0 0 0;
  background: linear-gradient(90deg, #fbfbf9, #eeece8 40%, #bfbbaf);
}
.hgrip {
  width: 16px;
  height: 2px;
  margin-bottom: 3px;
  background: repeating-linear-gradient(90deg, #8c8880 0 2px, transparent 2px 4px);
}
.mode {
  width: 18px;
  height: 17px;
  margin-left: 3px;
}
.mode svg {
  width: 14px;
  height: 14px;
}
.rule {
  width: 16px;
  height: 2px;
  margin: 4px 0 3px;
  border-top: 1px solid #8c8880;
  border-bottom: 1px solid #fff;
}
.op {
  width: 22px;
  height: 22px;
}
.op svg {
  width: 16px;
  height: 16px;
}
.op.sub {
  background: linear-gradient(135deg, transparent 50%, #555 50%) right 1px bottom 2px / 4px 4px no-repeat;
}
.end {
  align-self: stretch;
  justify-content: flex-end;
  height: 12px;
  padding-right: 3px;
  border-radius: 0 0 3px 3px;
  background: linear-gradient(90deg, #d4d0c8, #a09c94);
}
.end svg {
  width: 8px;
  height: 8px;
}
.panel {
  display: flex;
  flex-direction: column;
  width: 199px;
  border-top: 1px solid #fff;
  border-right: 1px solid #fff;
  background: #d4d0c8;
}
.phead {
  display: flex;
  align-items: center;
  height: 16px;
  padding: 0 4px 0 3px;
  background: linear-gradient(#fff, #d4d0c8);
}
.phead h2 {
  flex: 1;
  margin: 0;
  font-size: 11px;
  font-weight: 400;
}
.phead button {
  width: 10px;
  height: 10px;
  margin-left: 6px;
}
.phead svg {
  width: 10px;
  height: 10px;
}
.ptools {
  display: flex;
  align-items: center;
  height: 27px;
  padding-left: 2px;
  border-bottom: 1px solid #808080;
  background: linear-gradient(#fff, #f0efec 50%, #c9c5ba);
}
.ptools .tool:nth-child(2) {
  margin-left: 2px;
}
.ptools .sep {
  margin: 0 2px;
}
.treebox {
  display: flex;
  flex: 1;
  flex-direction: column;
  min-height: 0;
  margin: 3px 3px 3px 3px;
  padding: 2px 1px 1px;
  border: 1px solid #808080;
  outline: 1px solid #fff;
  background: #fff;
}
.root,
.treebox li {
  display: flex;
  align-items: center;
  height: 20px;
  overflow: hidden;
  white-space: nowrap;
}
.root .ico {
  margin: 0 7px 0 2px;
}
.treebox ul {
  margin: 0;
  padding: 0;
  list-style: none;
}
.stem {
  width: 24px;
  height: 20px;
  shape-rendering: crispEdges;
}
.node {
  width: 17px;
  height: 16px;
  margin-right: 9px;
  shape-rendering: crispEdges;
}
.mark {
  height: 4px;
  margin: -2px 4px 0;
  border: 1px solid #000;
  border-radius: 2px;
  background: #c4c0e8;
  z-index: 1;
}
.scroll {
  display: flex;
  height: 16px;
  background: repeating-conic-gradient(#fff 0 25%, #d4d0c8 0 50%) 0 0 / 2px 2px;
}
.scroll button,
.thumb {
  border: 1px solid;
  border-color: #fff #404040 #404040 #fff;
  background: #d4d0c8;
  box-shadow: inset -1px -1px #808080;
}
.scroll button {
  width: 16px;
}
.scroll svg {
  width: 6px;
  height: 8px;
}
.thumb {
  width: 112px;
}
.tabs {
  display: flex;
  height: 20px;
}
.tab {
  height: 20px;
  margin-left: 2px;
  padding: 0 5px 0 4px;
  border-right: 1px solid #000;
  border-bottom: 1px solid #000;
  background: linear-gradient(#fff, #f0f0e0);
}
.rest {
  flex: 1;
  border-top: 1px solid #000;
  background: linear-gradient(#fff, #c9c5ba);
}
.view {
  flex: 1;
  min-width: 0;
  margin: 0 1px 0 4px;
  border: 1px solid #d4d0c8;
  border-top: 2px solid #404040;
  border-left: 2px solid #404040;
  background: #fff;
}
.view svg {
  width: 100%;
  height: 100%;
}

/* property bar and status */
.props {
  display: flex;
  height: 58px;
  margin: 8px 6px 1px 27px;
}
.vgrip {
  width: 2px;
  height: 55px;
  margin-right: 3px;
  background: repeating-linear-gradient(#808080 0 2px, #fff 2px 4px);
}
.pbody {
  display: flex;
  flex: 1;
  flex-direction: column;
}
.pframe {
  height: 35px;
  border: 1px solid #808080;
  border-bottom-color: #000;
  background: #d4d0c8;
  box-shadow: inset 3px 0 #fff, inset 0 3px #eeece8, inset 0 -2px #eeece8;
}
.pfoot {
  flex: 1;
  background: linear-gradient(#fff, #c9c5ba);
}
.status {
  display: flex;
  gap: 2px;
  height: 22px;
  padding: 3px 0 2px 4px;
  border-bottom: 1px solid #404040;
}
.status p {
  flex: 1;
  margin: 0;
  border: 1px solid #808080;
  line-height: 15px;
  white-space: nowrap;
}
.status .cell {
  flex: none;
  width: 84px;
}

/* taskbar */
.taskbar {
  display: flex;
  flex: none;
  gap: 3px;
  height: 27px;
  padding: 1px 2px 0;
  background: #d4d0c8;
}
.task {
  justify-content: flex-start;
  gap: 3px;
  width: 160px;
  height: 22px;
  padding: 0 4px;
  border: 1px solid;
  border-color: #fff #404040 #404040 #fff;
  box-shadow: inset -1px -1px #808080;
  background: #d4d0c8;
}
.task span {
  white-space: nowrap;
}
.task.start {
  gap: 1px;
  width: 51px;
  margin-right: 2px;
  padding: 0 0 0 1px;
  font-weight: 700;
}
.task.active {
  border-color: #404040 #fff #fff #404040;
  box-shadow: none;
  background: repeating-conic-gradient(#fff 0 25%, #d4d0c8 0 50%) 0 0 / 2px 2px;
  font-weight: 700;
}
.lang {
  width: 16px;
  height: 16px;
  margin: 4px 1px 0 0;
  background: #0a246a;
  color: #fff;
}
.tray {
  display: flex;
  align-items: center;
  gap: 5px;
  height: 24px;
  padding: 0 7px 0 8px;
  border-left: 1px solid #808080;
  border-right: 1px solid #fff;
  border-bottom: 1px solid #fff;
}
.less svg {
  width: 8px;
  height: 8px;
}
.tray time {
  padding-left: 2px;
}
</style>
